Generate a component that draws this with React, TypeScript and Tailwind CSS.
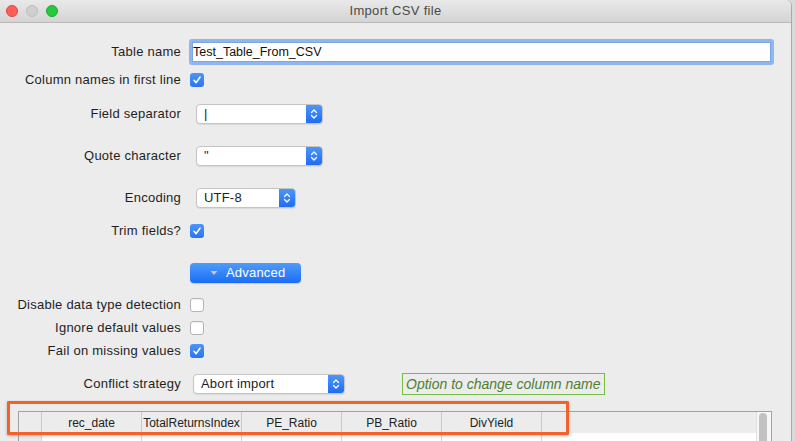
import type { ReactNode } from "react";

const FONT = { fontFamily: '"Liberation Sans", Arial, sans-serif' };

function Checkbox({ checked }: { checked?: boolean }) {
  if (!checked) {
    return (
      <span className="block h-[14px] w-[14px] rounded-[3px] border border-[#b4b4b4] bg-white shadow-[inset_0_1px_1px_rgba(0,0,0,0.06)]" />
    );
  }
  return (
    <span className="flex h-[14px] w-[14px] items-center justify-center rounded-[3px] bg-gradient-to-b from-[#4b96fa] to-[#2a74f3]">
      <svg width="10" height="10" viewBox="0 0 10 10" fill="none">
        <path d="M2 5.3 L4.1 7.6 L8 2.2" stroke="white" strokeWidth="1.6" strokeLinecap="round" strokeLinejoin="round" />
      </svg>
    </span>
  );
}

function PopupButton({ value, width }: { value: string; width: string }) {
  return (
    <div className={`flex h-[20px] ${width} items-stretch overflow-hidden rounded-[4px] border border-[#c4c4c4] bg-white shadow-[0_1px_1px_rgba(0,0,0,0.08)]`}>
      <span className="flex-1 truncate pl-[7px] text-[13px] leading-[18px] tracking-[0.2px] text-[#1e1e1e]">{value}</span>
      <span className="flex w-[16px] items-center justify-center bg-gradient-to-b from-[#4b96fa] to-[#1f6cf2]">
        <svg width="8" height="12" viewBox="0 0 8 12" fill="none">
          <path d="M1.5 4.5 L4 2 L6.5 4.5" stroke="white" strokeWidth="1.3" strokeLinecap="round" strokeLinejoin="round" />
          <path d="M1.5 7.5 L4 10 L6.5 7.5" stroke="white" strokeWidth="1.3" strokeLinecap="round" strokeLinejoin="round" />
        </svg>
      </span>
    </div>
  );
}

function Row({ label, top, height = "h-[20px]", children }: { label: string; top: string; height?: string; children?: ReactNode }) {
  return (
    <div className={`flex ${height} ${top} items-center`}>
      <div className="w-[181px] shrink-0 text-right text-[13px] tracking-[0.25px] text-[#1e1e1e]">{label}</div>
      {children}
    </div>
  );
}

const COLUMNS = ["rec_date", "TotalReturnsIndex", "PE_Ratio", "PB_Ratio", "DivYield", ""];

export default function App() {
  return (
    <div className="h-[441px] w-[795px] overflow-hidden bg-[#dadada]" style={FONT}>
      <div className="relative h-full w-[792px] overflow-hidden rounded-tr-[6px] border-r border-[#a9a9a9] bg-[#ececec]">
        {/* title bar */}
        <div className="relative flex h-[23px] items-center border-b border-[#b9b9b9] bg-gradient-to-b from-[#e9e9e9] to-[#d4d4d4]">
          <div className="flex items-center gap-[8px] pl-[6px]">
            <span className="h-[12px] w-[12px] rounded-full border border-[#e0443e] bg-[#fe5f57]" />
            <span className="h-[12px] w-[12px] rounded-full border border-[#bdbdbd] bg-[#d0d0d0]" />
            <span className="h-[12px] w-[12px] rounded-full border border-[#1aab29] bg-[#28c840]" />
          </div>
          <div className="absolute inset-0 flex items-center justify-center text-[13px] tracking-[0.3px] text-[#4a4a4a]">Import CSV file</div>
        </div>

        {/* form */}
        <div className="flex flex-col">
          <Row label="Table name" top="mt-[16px]" height="h-[26px]">
            <div className="ml-[8px] h-[26px] w-[585px] rounded-[3px] border-[3px] border-[#8fb6ee] bg-white">
              <div className="h-full border border-[#7aa6e6] pl-[0px] text-[12.5px] leading-[18px] text-[#111]">Test_Table_From_CSV</div>
            </div>
          </Row>
          <Row label="Column names in first line" top="mt-[5px]">
            <div className="ml-[9px]"><Checkbox checked /></div>
          </Row>
          <Row label="Field separator" top="mt-[14px]">
            <div className="ml-[15px]"><PopupButton value="|" width="w-[127px]" /></div>
          </Row>
          <Row label="Quote character" top="mt-[22px]">
            <div className="ml-[15px]"><PopupButton value={'"'} width="w-[127px]" /></div>
          </Row>
          <Row label="Encoding" top="mt-[22px]">
            <div className="ml-[15px]"><PopupButton value="UTF-8" width="w-[100px]" /></div>
          </Row>
          <Row label="Trim fields?" top="mt-[13px]">
            <div className="ml-[9px]"><Checkbox checked /></div>
          </Row>

          <div className="mt-[22px] flex h-[20px] pl-[190px]">
            <button className="flex h-[20px] w-[111px] items-center rounded-[4px] bg-gradient-to-b from-[#4e9bfb] to-[#1b6cf5] pl-[20px] text-[13px] tracking-[0.2px] text-white shadow-[0_1px_1px_rgba(0,0,0,0.15)]">
              <svg width="8" height="6" viewBox="0 0 8 6" className="mr-[8px]">
                <path d="M0.5 1 L7.5 1 L4 5 Z" fill="#c9c9c9" />
              </svg>
              Advanced
            </button>
          </div>

          <Row label="Disable data type detection" top="mt-[12px]">
            <div className="ml-[9px]"><Checkbox /></div>
          </Row>
          <Row label="Ignore default values" top="mt-[3px]">
            <div className="ml-[9px]"><Checkbox /></div>
          </Row>
          <Row label="Fail on missing values" top="mt-[3px]">
            <div className="ml-[9px]"><Checkbox checked /></div>
          </Row>
          <Row label="Conflict strategy" top="mt-[13px]">
            <div className="ml-[12px]"><PopupButton value="Abort import" width="w-[152px]" /></div>
            <div className="ml-[57px] flex h-[22px] items-center border border-[#74bf44] px-[3px] text-[14px] italic text-[#4f7f2c]">
              Option to change column name
            </div>
          </Row>

          {/* preview table */}
          <div className="ml-[18px] mt-[17px] flex h-[40px] w-[754px] border border-[#a2a2a2] bg-white">
            <div className="flex flex-1 flex-col">
              <div className="flex h-[21px] bg-[#ececec]">
                <div className="w-[22px] shrink-0" />
                {COLUMNS.map((c, i) => (
                  <div key={i} className="flex h-full w-[100px] shrink-0 items-center justify-center border-l border-[#c9c9c9] text-[12px] text-[#222]">
                    {c}
                  </div>
                ))}
              </div>
              <div className="flex flex-1">
                <div className="w-[22px] shrink-0 bg-[#ececec]" />
                {COLUMNS.map((_, i) => (
                  <div key={i} className="w-[100px] shrink-0 border-l border-[#d6d6d6]" />
                ))}
              </div>
            </div>
            <div className="w-[15px] shrink-0 border-l border-[#e2e2e2] bg-[#f7f7f7] pl-[2px] pt-[1px]">
              <div className="h-[40px] w-[8px] rounded-full bg-[#c2c2c2]" />
            </div>
          </div>
        </div>

        {/* highlight around the header row */}
        <div className="absolute left-[7px] top-[401px] h-[34px] w-[562px] rounded-[1px] border-[3px] border-[#f2622a] shadow-[0_1px_3px_rgba(0,0,0,0.25)]" />
      </div>
    </div>
  );
}
